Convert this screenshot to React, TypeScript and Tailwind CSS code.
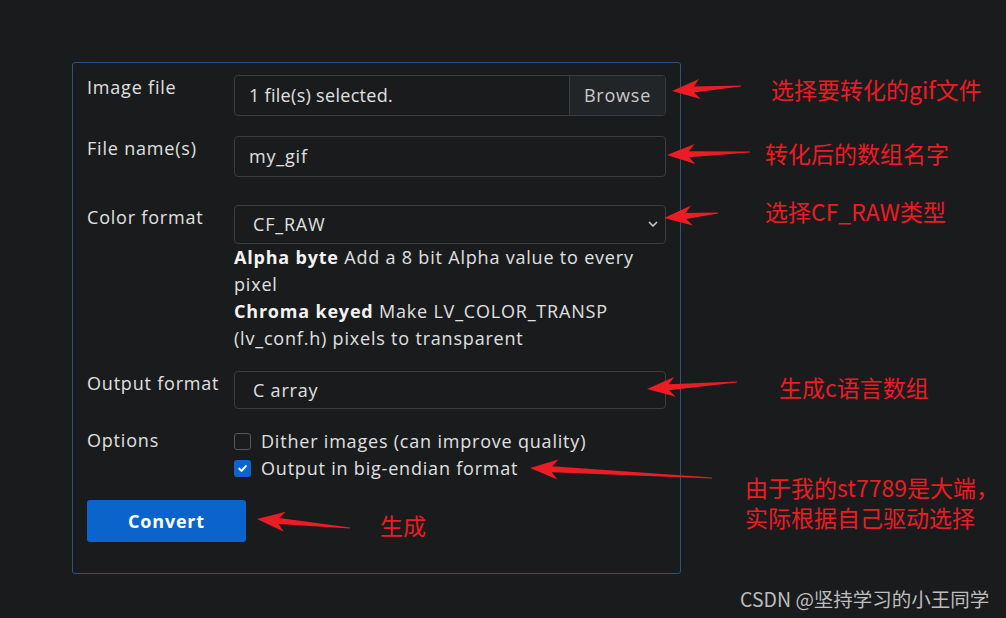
import React from 'react';

const ARROWS = [
  { tail: [741, 86], tip: [672, 91] },
  { tail: [750, 152], tip: [667, 155] },
  { tail: [718, 213], tip: [664, 218] },
  { tail: [737, 382], tip: [647, 389] },
  { tail: [712, 478], tip: [530, 468] },
  { tail: [350, 528], tip: [257, 519] },
];

const NOTES = [
  { text: '选择要转化的gif文件', cls: 'left-[771px] top-[76px]' },
  { text: '转化后的数组名字', cls: 'left-[765px] top-[140px]' },
  { text: '选择CF_RAW类型', cls: 'left-[765px] top-[198px]' },
  { text: '生成c语言数组', cls: 'left-[779px] top-[374px]' },
  { text: '由于我的st7789是大端，', cls: 'left-[745px] top-[474px]' },
  { text: '实际根据自己驱动选择', cls: 'left-[745px] top-[504px]' },
  { text: '生成', cls: 'left-[380px] top-[512px]' },
];

function arrowPoints(tail: number[], tip: number[]) {
  const dx = tip[0] - tail[0];
  const dy = tip[1] - tail[1];
  const len = Math.hypot(dx, dy);
  const ux = dx / len;
  const uy = dy / len;
  const nx = -uy;
  const ny = ux;
  const L = 24;
  const W = 10;
  const w = 3;
  const bx = tip[0] - ux * L;
  const by = tip[1] - uy * L;
  // barbs sweep a little back from the head base
  const sx = bx - ux * 4;
  const sy = by - uy * 4;
  const pts = [
    [tail[0] + nx * 0.6, tail[1] + ny * 0.6],
    [bx + ux * 2 + nx * w, by + uy * 2 + ny * w],
    [sx + nx * W, sy + ny * W],
    [tip[0], tip[1]],
    [sx - nx * W, sy - ny * W],
    [bx + ux * 2 - nx * w, by + uy * 2 - ny * w],
    [tail[0] - nx * 0.6, tail[1] - ny * 0.6],
  ];
  return pts.map((p) => `${p[0].toFixed(1)},${p[1].toFixed(1)}`).join(' ');
}

function Row({ label, children, className }: { label: string; children: React.ReactNode; className?: string }) {
  return (
    <div className={`flex ${className ?? ''}`}>
      <div className="w-[147px] shrink-0 leading-[24px] whitespace-nowrap">{label}</div>
      <div className="flex-1 min-w-0">{children}</div>
    </div>
  );
}

function Checkbox({ checked }: { checked?: boolean }) {
  return checked ? (
    <span className="w-[17px] h-[17px] rounded-[3px] bg-[#0d64d0] flex items-center justify-center shrink-0">
      <svg width="11" height="11" viewBox="0 0 12 12">
        <path d="M2.5 6.2 L5 8.6 L9.6 3.4" fill="none" stroke="white" strokeWidth="2.2" strokeLinecap="round" strokeLinejoin="round" />
      </svg>
    </span>
  ) : (
    <span className="w-[17px] h-[17px] rounded-[3px] border border-[#56585c] bg-[#1b1c1e] shrink-0" />
  );
}

export default function App() {
  return (
    <div
      className="relative w-[1006px] h-[618px] overflow-hidden bg-[#1a1b1d] text-[#e0e0e0] text-[18px] tracking-[0.8px] pt-[62px] pl-[72px]"
      style={{ fontFamily: '"Open Sans", "Noto Sans", sans-serif' }}
    >
      {/* form panel */}
      <div className="w-[609px] h-[512px] border border-[#2c5281] rounded-[3px] px-[14px] pt-[12px]">
        <Row label="Image file">
          <div className="flex h-[41px] border border-[#3a3c3f] rounded-[4px] overflow-hidden">
            <div className="flex-1 flex items-center px-[14px] tracking-[0.3px]">1 file(s) selected.</div>
            <div className="w-[96px] flex items-center justify-center bg-[#222527] border-l border-[#3a3c3f] text-[#c9c9c9]">Browse</div>
          </div>
        </Row>

        <Row label="File name(s)" className="mt-[20px]">
          <div className="flex items-center h-[41px] border border-[#3a3c3f] rounded-[4px] px-[14px]">my_gif</div>
        </Row>

        <Row label="Color format" className="mt-[28px]">
          <div className="flex items-center h-[39px] border border-[#3a3c3f] rounded-[4px] pl-[18px] pr-[7px]">
            <span className="flex-1">CF_RAW</span>
            <svg width="10" height="7" viewBox="0 0 10 7">
              <path d="M1.5 1.5 L5 5 L8.5 1.5" fill="none" stroke="#c8c8c8" strokeWidth="1.7" strokeLinecap="round" strokeLinejoin="round" />
            </svg>
          </div>
          <div className="leading-[27px]">
            <p><b className="font-bold text-[#f2f2f2]">Alpha byte</b> Add a 8 bit Alpha value to every pixel</p>
            <p><b className="font-bold text-[#f2f2f2]">Chroma keyed</b> Make LV_COLOR_TRANSP (lv_conf.h) pixels to transparent</p>
          </div>
        </Row>

        <Row label="Output format" className="mt-[19px]">
          <div className="flex items-center h-[38px] border border-[#3a3c3f] rounded-[4px] pl-[18px]">C array</div>
        </Row>

        <Row label="Options" className="mt-[19px]">
          <div className="leading-[27px]">
            <label className="flex items-center gap-[10px]">
              <Checkbox />
              <span>Dither images (can improve quality)</span>
            </label>
            <label className="flex items-center gap-[10px]">
              <Checkbox checked />
              <span>Output in big-endian format</span>
            </label>
          </div>
        </Row>

        <button className="mt-[18px] w-[159px] h-[42px] rounded-[3px] bg-[#0a64cc] text-white font-bold">Convert</button>
      </div>

      {/* annotation arrows */}
      <svg className="absolute inset-0 pointer-events-none" width="1006" height="618">
        {ARROWS.map((a, i) => (
          <polygon key={i} points={arrowPoints(a.tail, a.tip)} fill="#ec1c24" />
        ))}
      </svg>

      {NOTES.map((n, i) => (
        <div
          key={i}
          className={`absolute ${n.cls} text-[23px] leading-[26px] tracking-normal text-[#ec1c24] whitespace-nowrap`}
          style={{ fontFamily: '"Noto Sans CJK SC", sans-serif' }}
        >
          {n.text}
        </div>
      ))}

      <div
        className="absolute left-[740px] top-[586px] text-[19.5px] leading-[26px] tracking-normal text-[#bdbdbd] whitespace-nowrap"
        style={{ fontFamily: '"Noto Sans CJK SC", sans-serif' }}
      >
        CSDN @坚持学习的小王同学
      </div>
    </div>
  );
}
